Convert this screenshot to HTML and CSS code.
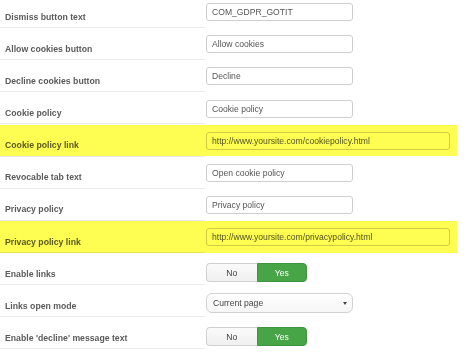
FILE: index.html
```html
<!DOCTYPE html>
<html>
<head>
<meta charset="utf-8">
<link rel="stylesheet" href="styles.css">
</head>
<body>
<div class="form">
  <div class="row"><div class="label">Dismiss button text</div><div class="control"><input class="field" type="text" value="COM_GDPR_GOTIT"></div></div>
  <div class="row"><div class="label">Allow cookies button</div><div class="control"><input class="field" type="text" value="Allow cookies"></div></div>
  <div class="row"><div class="label">Decline cookies button</div><div class="control"><input class="field" type="text" value="Decline"></div></div>
  <div class="row"><div class="label">Cookie policy</div><div class="control"><input class="field" type="text" value="Cookie policy"></div></div>
  <div class="row hl"><div class="label">Cookie policy link</div><div class="control"><input class="field wide" type="text" value="http://www.yoursite.com/cookiepolicy.html"></div></div>
  <div class="row"><div class="label">Revocable tab text</div><div class="control"><input class="field" type="text" value="Open cookie policy"></div></div>
  <div class="row"><div class="label">Privacy policy</div><div class="control"><input class="field" type="text" value="Privacy policy"></div></div>
  <div class="row hl"><div class="label">Privacy policy link</div><div class="control"><input class="field wide" type="text" value="http://www.yoursite.com/privacypolicy.html"></div></div>
  <div class="row"><div class="label">Enable links</div><div class="control toggle-ctl"><div class="toggle"><span class="opt no">No</span><span class="opt yes">Yes</span></div></div></div>
  <div class="row"><div class="label">Links open mode</div><div class="control select-ctl"><div class="select"><span>Current page</span><span class="arrow"></span></div></div></div>
  <div class="row"><div class="label">Enable 'decline' message text</div><div class="control toggle-ctl"><div class="toggle"><span class="opt no">No</span><span class="opt yes">Yes</span></div></div></div>
</div>
</body>
</html>
```
FILE: styles.css
```css
html, body {
  margin: 0;
  padding: 0;
  background: #fff;
}
body {
  font-family: "Liberation Sans", Arial, sans-serif;
  width: 474px;
  height: 353px;
  overflow: hidden;
}
.form {
  margin-top: -4.14px;
}
.row {
  display: flex;
  height: 32.14px;
  position: relative;
}
.row.hl::after {
  content: "";
  position: absolute;
  left: 0;
  top: 0.6px;
  width: 457px;
  height: 31.4px;
  background: #fefd52;
  mix-blend-mode: multiply;
  pointer-events: none;
}
.label {
  width: 205px;
  box-sizing: border-box;
  padding: 15.8px 0 0 5px;
  border-bottom: 1px solid #ebebeb;
  font-weight: bold;
  font-size: 8.7px;
  line-height: 10px;
  color: #5a5a5a;
  white-space: nowrap;
}
.control {
  margin-left: 1px;
  padding-top: 7.3px;
}
.field {
  display: block;
  box-sizing: border-box;
  width: 147px;
  height: 18px;
  margin: 0;
  padding: 0 5px;
  border: 1px solid #cfcfcf;
  border-radius: 3px;
  background: #fff;
  font-family: "Liberation Sans", Arial, sans-serif;
  font-size: 8.6px;
  color: #555;
  outline: none;
}
.field.wide {
  width: 244px;
}
.toggle-ctl {
  padding-top: 10.3px;
}
.toggle {
  display: flex;
  height: 19px;
  width: 101px;
}
.opt {
  box-sizing: border-box;
  width: 50.5px;
  height: 19px;
  display: flex;
  align-items: center;
  justify-content: center;
  font-size: 8.6px;
}
.opt.no {
  background: linear-gradient(#fafafa, #f0f0f0);
  border: 1px solid #d0d0d0;
  border-right: none;
  border-radius: 4px 0 0 4px;
  color: #444;
}
.opt.yes {
  background: #47a447;
  border: 1px solid #3f953f;
  border-radius: 0 4px 4px 0;
  color: #fff;
}
.select-ctl {
  padding-top: 7.9px;
}
.select {
  box-sizing: border-box;
  width: 147px;
  height: 20px;
  border: 1px solid #d2d2d2;
  border-radius: 6px;
  background: linear-gradient(#fff, #f6f6f6);
  display: flex;
  align-items: center;
  justify-content: space-between;
  padding: 0 5px 0 6px;
  font-size: 8.6px;
  color: #444;
}
.arrow {
  width: 0;
  height: 0;
  border-left: 2px solid transparent;
  border-right: 2px solid transparent;
  border-top: 3px solid #444;
  margin-top: 1px;
}
```
